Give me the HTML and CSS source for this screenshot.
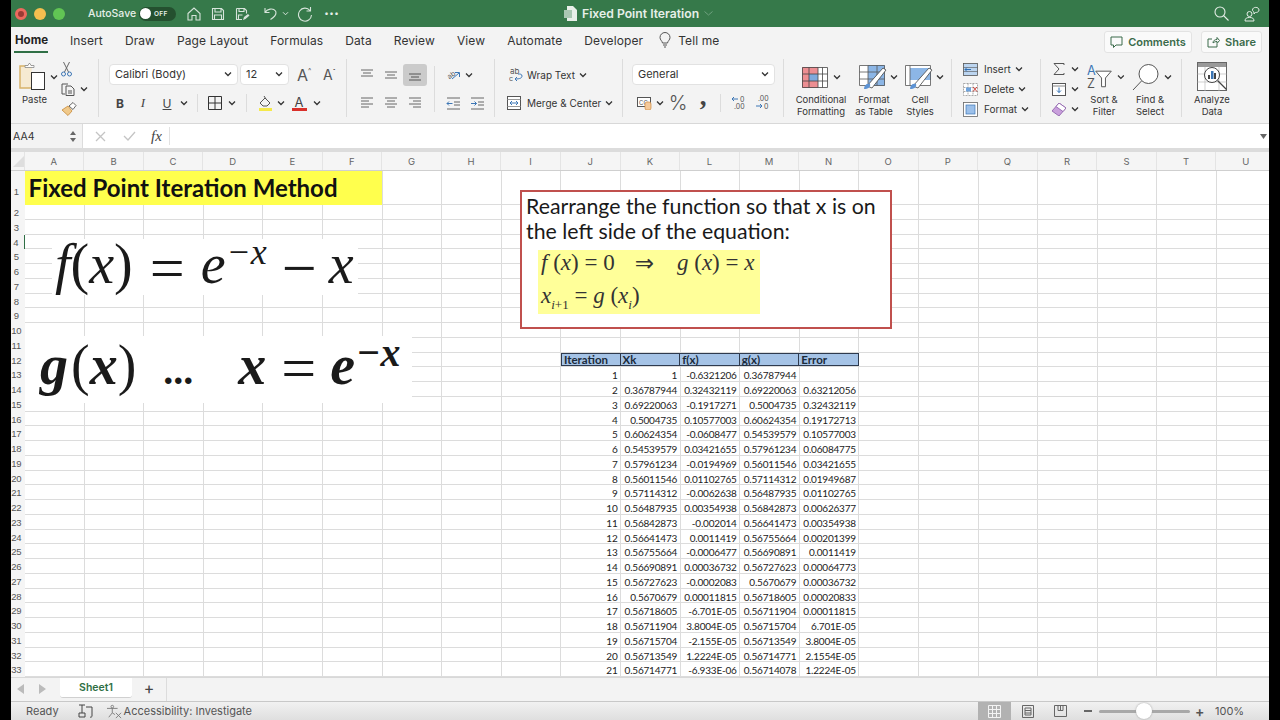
FILE: index.html
```html
<!DOCTYPE html>
<html lang="en">
<head>
    <meta charset="UTF-8">
    <title>Fixed Point Iteration</title>
    <link rel="stylesheet" href="styles.css">
</head>
<body>

<svg class="sprite" aria-hidden="true">
    <symbol id="chev" viewBox="0 0 8 6"><path d="M1 1.5l3 3 3-3" fill="none" stroke="#333" stroke-width="1.3"/></symbol>
    <symbol id="al-top" viewBox="0 0 14 14"><path d="M1 2h12M3 5h8M1 8h12" stroke="#666" fill="none"/></symbol>
    <symbol id="al-mid" viewBox="0 0 14 14"><path d="M1 4h12M3 7h8M1 10h12" stroke="#666" fill="none"/></symbol>
    <symbol id="al-bot" viewBox="0 0 14 14"><path d="M1 6h12M3 9h8M1 12h12" stroke="#555" fill="none"/></symbol>
    <symbol id="al-left" viewBox="0 0 14 14"><path d="M1 2h12M1 5h8M1 8h12M1 11h8" stroke="#666" fill="none"/></symbol>
    <symbol id="al-center" viewBox="0 0 14 14"><path d="M1 2h12M3 5h8M1 8h12M3 11h8" stroke="#666" fill="none"/></symbol>
    <symbol id="al-right" viewBox="0 0 14 14"><path d="M1 2h12M5 5h8M1 8h12M5 11h8" stroke="#666" fill="none"/></symbol>
</svg>

<div class="app">

    <!-- title bar -->
    <div class="titlebar">
        <div class="lights">
            <span class="light red"></span>
            <span class="light yellow"></span>
            <span class="light green"></span>
        </div>
        <span class="autosave">AutoSave</span>
        <span class="toggle"><i></i><b>OFF</b></span>
        <div class="quick">
            <svg width="14" height="14" viewBox="0 0 14 14"><path d="M1 6.5L7 1l6 5.5V13H9V8.5H5V13H1z" fill="none" stroke="#d6e4da" stroke-width="1.1"/></svg>
            <svg width="14" height="14" viewBox="0 0 14 14"><path d="M1.5 1.5h9l2 2v9h-11zM4 1.5V5h6V1.5M3.5 12.5V8h7v4.5" fill="none" stroke="#d6e4da" stroke-width="1.1"/></svg>
            <svg width="15" height="14" viewBox="0 0 15 14"><path d="M1.5 1.5h8l2 2v3M4 1.5v3h5v-3M1.5 1.5v11H7M3.5 12V8h4" fill="none" stroke="#d6e4da" stroke-width="1.1"/><path d="M8 13l1-3 4-3 1.5 1.5-4 3.5z" fill="#d6e4da"/></svg>
            <svg class="undo" width="15" height="15" viewBox="0 0 15 15"><path d="M2 2v4.5h4.5M2 6.5C4 3 10 1.5 12.5 5c1.5 3-1 6-5 8.5" fill="none" stroke="#d6e4da" stroke-width="1.1"/></svg>
            <svg class="undo-chev" width="7" height="5" viewBox="0 0 8 6"><path d="M1 1.5l3 3 3-3" fill="none" stroke="#d6e4da" stroke-width="1.2"/></svg>
            <svg class="redo" width="16" height="16" viewBox="0 0 16 16"><path d="M13 4.5A6.5 6.5 0 1 0 14.5 9M13.5 1v4h-4" fill="none" stroke="#d6e4da" stroke-width="1.1"/></svg>
            <span class="more">&middot;&middot;&middot;</span>
        </div>
        <div class="doctitle">
            <svg width="13" height="15" viewBox="0 0 13 15"><path d="M3 0h6l4 4v11H3z" fill="#e8efe9"/><rect x="0" y="4" width="8" height="8" fill="#a9c7b2"/></svg>
            <span>Fixed Point Iteration</span>
            <svg width="9" height="5" viewBox="0 0 9 5"><path d="M.5.5l4 3.5 4-3.5" fill="none" stroke="#6fa07f"/></svg>
        </div>
        <div class="tright">
            <svg width="15" height="15" viewBox="0 0 15 15"><circle cx="6" cy="6" r="5" fill="none" stroke="#e4ede6" stroke-width="1.1"/><path d="M9.5 9.5l5 5" stroke="#e4ede6" stroke-width="1.1"/></svg>
            <svg width="16" height="16" viewBox="0 0 16 16"><circle cx="5.5" cy="8" r="2.5" fill="none" stroke="#e4ede6"/><path d="M1 15c0-3 2-3.500 4.500-3.500S10 12 10 15zM8.500 4c0-3.500 6.500-3.500 6.500 0 0 2-2 2.500-3.500 2.500L10 8V6c-1-.5-1.500-1-1.500-2z" fill="none" stroke="#e4ede6"/></svg>
        </div>
    </div>

    <!-- ribbon tabs -->
    <div class="tabs">
        <span class="tab active">Home</span>
        <span class="tab">Insert</span>
        <span class="tab">Draw</span>
        <span class="tab">Page Layout</span>
        <span class="tab">Formulas</span>
        <span class="tab">Data</span>
        <span class="tab">Review</span>
        <span class="tab">View</span>
        <span class="tab">Automate</span>
        <span class="tab">Developer</span>
        <svg class="bulb" width="12" height="16" viewBox="0 0 12 16"><path d="M3.5 11C3 8.5 1 8 1 5.5a5 5 0 0 1 10 0C11 8 9 8.5 8.5 11zM4 13h4M5 15h2" fill="none" stroke="#555"/></svg>
        <span class="tab tell">Tell me</span>
        <div class="tabbtns">
            <span class="tabbtn comments">
                <svg width="13" height="12" viewBox="0 0 13 12"><path d="M1 1h11v8H6l-2.500 2.500V9H1z" fill="none" stroke="#3a6a4a"/></svg>
                Comments
            </span>
            <span class="tabbtn share">
                <svg width="13" height="12" viewBox="0 0 13 12"><path d="M5 3H1v8h9V8M6 7c0-2.500 2-3.500 4-3.500V1.500L12.500 4.500 10 7.500V5.500C8.500 5.500 7 6 6 7z" fill="none" stroke="#3a6a4a"/></svg>
                Share
            </span>
        </div>
    </div>

    <!-- ribbon -->
    <div class="ribbon">

        <div class="rgroup g-clip">
            <div class="big paste">
                <div class="pic">
                    <svg width="27" height="28" viewBox="0 0 27 28"><path d="M13 3H1v22h11" fill="#f6ead2" stroke="#d8b26a" stroke-width="1.5"/><path d="M6 4.500V2.500h3L10 .5h1l1 2h3v2z" fill="#fff" stroke="#888" stroke-width=".8"/><rect x="12.5" y="9.5" width="13" height="17" fill="#fff" stroke="#333"/></svg>
                    <svg class="ch" width="8" height="6"><use href="#chev"/></svg>
                </div>
                <div class="lbl">Paste</div>
            </div>
            <div class="tri">
                <div class="tri-row">
                    <svg width="11" height="15" viewBox="0 0 11 15"><path d="M2.5 0l5 10M8.5 0l-5 10" stroke="#666" fill="none"/><circle cx="2.5" cy="12" r="2" fill="none" stroke="#3c76b5"/><circle cx="8.5" cy="12" r="2" fill="none" stroke="#3c76b5"/></svg>
                </div>
                <div class="tri-row">
                    <svg width="16" height="13" viewBox="0 0 16 13"><path d="M7 1H1v10h3" fill="none" stroke="#555"/><path d="M5 3h5l3 3v6.500H5zM7 8h4M7 10h4" fill="none" stroke="#555"/></svg>
                    <svg class="ch" width="8" height="6"><use href="#chev"/></svg>
                </div>
                <div class="tri-row brush">
                    <svg width="15" height="14" viewBox="0 0 15 14"><path d="M0 8l6-4 4 5-4 4.500z" fill="#f0c98a" stroke="#c68a3a" stroke-width=".8"/><path d="M7 4l4-3.500 3 3-3 4z" fill="#fff" stroke="#444" stroke-width=".8"/></svg>
                </div>
            </div>
        </div>

        <div class="rgroup g-font">
            <div class="r1">
                <span class="select font-sel">Calibri (Body)<svg width="8" height="6"><use href="#chev"/></svg></span>
                <span class="select size-sel">12<svg width="8" height="6"><use href="#chev"/></svg></span>
                <span class="grow">A<sup>^</sup></span>
                <span class="shrink">A<sup>&#711;</sup></span>
            </div>
            <div class="r2">
                <span class="slot w22 ftxt bold">B</span>
                <span class="slot w24 ftxt ital">I</span>
                <span class="slot w24 ftxt und">U</span>
                <span class="slot w10"><svg width="8" height="6"><use href="#chev"/></svg></span>
                <span class="slot w16"><i class="vline"></i></span>
                <span class="slot w20"><svg width="14" height="14" viewBox="0 0 14 14"><path d="M.5.5h13v13H.5zM7 .5v13M.5 7h13" fill="none" stroke="#333"/></svg></span>
                <span class="slot w14"><svg width="8" height="6"><use href="#chev"/></svg></span>
                <span class="slot w14"><i class="vline"></i></span>
                <span class="slot w24">
                    <svg width="15" height="16" viewBox="0 0 15 16"><path d="M2 8l5-5 5 5-3 3H5z" fill="none" stroke="#555"/><path d="M6 1l2 3" stroke="#555"/><rect x="1" y="13" width="13" height="3" fill="#f5e94a"/></svg>
                </span>
                <span class="slot w8"><svg width="8" height="6"><use href="#chev"/></svg></span>
                <span class="slot w28 fcolor">A<i></i></span>
                <span class="slot w8"><svg width="8" height="6"><use href="#chev"/></svg></span>
            </div>
        </div>

        <div class="rgroup g-align">
            <div class="a-left">
                <div class="r1">
                    <span class="slot w24"><svg width="14" height="14"><use href="#al-top"/></svg></span>
                    <span class="slot w24"><svg width="14" height="14"><use href="#al-mid"/></svg></span>
                    <span class="slot w24 on"><svg width="14" height="14"><use href="#al-bot"/></svg></span>
                </div>
                <div class="r2">
                    <span class="slot w24"><svg width="14" height="14"><use href="#al-left"/></svg></span>
                    <span class="slot w24"><svg width="14" height="14"><use href="#al-center"/></svg></span>
                    <span class="slot w24"><svg width="14" height="14"><use href="#al-right"/></svg></span>
                </div>
            </div>
            <i class="vline tall"></i>
            <div class="a-right">
                <div class="r1">
                    <span class="slot w24"><svg width="18" height="16" viewBox="0 0 18 16"><text x="3" y="11" font-size="7" fill="#555" transform="rotate(-35 6 8)">ab</text><path d="M8 12l7-6M11 5.500h4.500V10" fill="none" stroke="#3c76b5"/></svg></span>
                    <span class="slot w8"><svg width="8" height="6"><use href="#chev"/></svg></span>
                </div>
                <div class="r2">
                    <span class="slot w24"><svg width="14" height="13" viewBox="0 0 14 13"><path d="M1 1h13M8 5h6M8 8h6M1 12h13" stroke="#666" fill="none"/><path d="M6.500 6.500H1M3 4.500l-2 2 2 2" fill="none" stroke="#3c76b5"/></svg></span>
                    <span class="slot w24"><svg width="14" height="13" viewBox="0 0 14 13"><path d="M1 1h13M8 5h6M8 8h6M1 12h13" stroke="#666" fill="none"/><path d="M1 6.500h5.500M4.500 4.500l2 2-2 2" fill="none" stroke="#3c76b5"/></svg></span>
                </div>
            </div>
        </div>

        <div class="rgroup g-wrap">
            <div class="r1 lineitem">
                <svg class="wrap-ic" width="14" height="15" viewBox="0 0 14 15"><text x="1" y="7" font-size="8" fill="#555">ab</text><text x="0" y="14" font-size="7" fill="#555">c</text><path d="M6 12c5 0 7-1 7-3s-2-2-4-2M6 12l2-2M6 12l2 2" fill="none" stroke="#3c76b5"/></svg>
                <span>Wrap Text</span>
                <svg class="after" width="8" height="6"><use href="#chev"/></svg>
            </div>
            <div class="r2 lineitem">
                <svg width="14" height="14" viewBox="0 0 14 14"><rect x=".5" y=".5" width="13" height="13" fill="#fff" stroke="#555"/><path d="M3 7h8M5 5L3 7l2 2M9 5l2 2-2 2" fill="none" stroke="#3c76b5"/><path d="M.5 3.500h13M.5 10.500h13" stroke="#999"/></svg>
                <span>Merge &amp; Center</span>
                <svg class="after" width="8" height="6"><use href="#chev"/></svg>
            </div>
        </div>

        <div class="rgroup g-num">
            <div class="r1">
                <span class="select num-sel">General<svg width="8" height="6"><use href="#chev"/></svg></span>
            </div>
            <div class="r2 num-row">
                <span class="slot w16"><svg width="15" height="13" viewBox="0 0 15 13"><rect x=".5" y=".5" width="13" height="9" fill="#fff" stroke="#555"/><text x="2" y="7.500" font-size="6" fill="#555">CC</text><rect x="8" y="5" width="6" height="8" rx="2" fill="#f4c99a" stroke="#d08a3e" stroke-width=".7"/></svg></span>
                <span class="slot w16"><svg width="8" height="6"><use href="#chev"/></svg></span>
                <span class="slot w20 pct">%</span>
                <span class="slot w20 comma">,</span>
                <span class="slot w14"><i class="vline"></i></span>
                <span class="slot w24"><svg width="18" height="16" viewBox="0 0 18 16"><path d="M8 4H2M4 2L2 4l2 2" fill="none" stroke="#3c76b5"/><text x="10" y="7" font-size="7" fill="#555">0</text><text x="4" y="14" font-size="7" fill="#555">.00</text></svg></span>
                <span class="slot w24"><svg width="18" height="16" viewBox="0 0 18 16"><text x="4" y="6" font-size="7" fill="#555">.00</text><path d="M2 11h6M6 9l2 2-2 2" fill="none" stroke="#3c76b5"/><text x="10" y="14" font-size="7" fill="#555">0</text></svg></span>
            </div>
        </div>

        <div class="rgroup g-styles">
            <div class="big cond">
                <div class="pic">
                    <svg width="26" height="21" viewBox="0 0 26 21"><rect width="26" height="21" fill="#fff"/><path d="M0 0h16v7H0zM0 14h16v7H0z" fill="#ec8e92"/><rect x="7" y="7" width="9" height="7" fill="#7fa9dc"/><rect x="0" y="7" width="7" height="7" fill="#ec8e92"/><path d="M.5.5h25v20H.5zM.5 7h25M.5 14h25M7 .5v20M16 .5v20M20.500 .5v20" fill="none" stroke="#444" stroke-width=".8"/></svg>
                    <svg class="ch" width="8" height="6"><use href="#chev"/></svg>
                </div>
                <div class="lbl">Conditional<br>Formatting</div>
            </div>
            <div class="big astable">
                <div class="pic">
                    <svg width="28" height="26" viewBox="0 0 28 26"><rect y="1" width="26" height="21" fill="#fff"/><rect x="9" y="1" width="17" height="21" fill="#8cb6e6"/><path d="M.5 1.500h25v20H.5zM.5 8h25M.5 15h25M9 1.500v20M18 1.500v20" fill="none" stroke="#555" stroke-width=".8"/><path d="M8 22L24 4l3 2-14 18z" fill="#fff" stroke="#444" stroke-width=".8"/><path d="M5 25c0-4 3-6 6-5 1 3-2 5-6 5z" fill="#5d93d4"/></svg>
                    <svg class="ch" width="8" height="6"><use href="#chev"/></svg>
                </div>
                <div class="lbl">Format<br>as Table</div>
            </div>
            <div class="big cellst">
                <div class="pic">
                    <svg width="28" height="26" viewBox="0 0 28 26"><rect y="1" width="26" height="21" fill="#fff"/><rect x="5" y="4" width="21" height="12" fill="#8cb6e6"/><path d="M.5 1.500h25v20H.5zM5 1.500v20" fill="none" stroke="#555" stroke-width=".8"/><path d="M8 22L24 4l3 2-14 18z" fill="#fff" stroke="#444" stroke-width=".8"/><path d="M5 25c0-4 3-6 6-5 1 3-2 5-6 5z" fill="#5d93d4"/></svg>
                    <svg class="ch" width="8" height="6"><use href="#chev"/></svg>
                </div>
                <div class="lbl">Cell<br>Styles</div>
            </div>
        </div>

        <div class="rgroup g-cells">
            <div class="tri-row lineitem">
                <svg width="15" height="13" viewBox="0 0 15 13"><rect x=".5" y=".5" width="14" height="12" fill="#bcd5f0" stroke="#555" stroke-width=".8"/><path d="M.5 4.500h14M.5 8.500h14" stroke="#555" stroke-width=".6"/><path d="M8 6.500H2M4 4.500l-2 2 2 2" fill="none" stroke="#2e6fb5"/></svg>
                <span>Insert</span>
                <svg class="after" width="8" height="6"><use href="#chev"/></svg>
            </div>
            <div class="tri-row lineitem">
                <svg width="15" height="13" viewBox="0 0 15 13"><path d="M.5.5h14v12H.5zM.5 4.500h14M.5 8.500h14M5 .5v12M10 .5v12" fill="#fff" stroke="#888" stroke-width=".7" stroke-dasharray="2 1"/><rect x="3" y="4.500" width="5" height="4" fill="#6fa3dc"/><path d="M10 4l4 4.500M14 4l-4 4.500" stroke="#d0413a"/></svg>
                <span>Delete</span>
                <svg class="after" width="8" height="6"><use href="#chev"/></svg>
            </div>
            <div class="tri-row lineitem">
                <svg width="15" height="15" viewBox="0 0 15 15"><rect x=".5" y=".5" width="14" height="14" fill="#fff" stroke="#666" stroke-width=".8"/><rect x="3" y="3" width="9" height="9" fill="#9cc0ea" stroke="#3c76b5" stroke-width=".7"/></svg>
                <span>Format</span>
                <svg class="after" width="8" height="6"><use href="#chev"/></svg>
            </div>
        </div>

        <div class="rgroup g-edit">
            <div class="tri">
                <div class="tri-row">
                    <svg width="14" height="12" viewBox="0 0 12 12"><path d="M11 2V.5H1L6 6l-5 5.500h10V10" fill="none" stroke="#555"/></svg>
                    <svg class="ch" width="8" height="6"><use href="#chev"/></svg>
                </div>
                <div class="tri-row">
                    <svg width="14" height="13" viewBox="0 0 14 13"><rect x=".5" y=".5" width="13" height="12" fill="#fff" stroke="#555"/><path d="M.5 3h13" stroke="#888"/><path d="M7 4.500v5M5 7.500l2 2 2-2" fill="none" stroke="#2e6fb5"/></svg>
                    <svg class="ch" width="8" height="6"><use href="#chev"/></svg>
                </div>
                <div class="tri-row">
                    <svg width="14" height="13" viewBox="0 0 14 13"><path d="M0 8l7-8 7 5-7 8z" fill="#c9a0dc" stroke="#8a5aa8" stroke-width=".8"/><path d="M7 0l7 5-3 3.500-7-5z" fill="#fff" stroke="#8a5aa8" stroke-width=".8"/></svg>
                    <svg class="ch" width="8" height="6"><use href="#chev"/></svg>
                </div>
            </div>
            <div class="big sort">
                <div class="pic">
                    <svg width="28" height="31" viewBox="0 0 28 31"><text x="1" y="13" font-size="13" fill="#3c76b5">A</text><text x="1" y="26" font-size="13" fill="#555">Z</text><path d="M10 9h16l-6 7v9h-4v-9z" fill="#fff" stroke="#555"/></svg>
                    <svg class="ch" width="8" height="6"><use href="#chev"/></svg>
                </div>
                <div class="lbl">Sort &amp;<br>Filter</div>
            </div>
            <div class="big find">
                <div class="pic">
                    <svg width="27" height="27" viewBox="0 0 27 27"><circle cx="16.5" cy="10" r="9.5" fill="#fff" stroke="#555"/><path d="M9.5 17L1 26" stroke="#555"/></svg>
                    <svg class="ch" width="8" height="6"><use href="#chev"/></svg>
                </div>
                <div class="lbl">Find &amp;<br>Select</div>
            </div>
        </div>

        <div class="rgroup g-an">
            <div class="big analyze">
                <div class="pic">
                    <svg width="31" height="30" viewBox="0 0 31 30"><rect x=".5" y=".5" width="29" height="28" fill="#fff" stroke="#666"/><rect x="1" y="1" width="28" height="4" fill="#999"/><path d="M.5 12h29M.5 20h29M8 5v24M22 5v24" stroke="#bbb" stroke-width=".7"/><circle cx="15" cy="13" r="7.5" fill="#fff" stroke="#444"/><rect x="11" y="13" width="2" height="4" fill="#444"/><rect x="14" y="9" width="2.500" height="8" fill="#3c76b5"/><rect x="17" y="11" width="2" height="6" fill="#444"/><path d="M20.500 18.500l9 9" stroke="#444" stroke-width="1.2"/></svg>
                </div>
                <div class="lbl">Analyze<br>Data</div>
            </div>
        </div>
    </div>

    <!-- formula bar -->
    <div class="fbar">
        <div class="namebox">
            <span>AA4</span>
            <svg width="8" height="13" viewBox="0 0 8 13"><path d="M4 1l3 4H1zM4 12L1 8h6z" fill="#666"/></svg>
        </div>
        <div class="fbtns">
            <svg width="11" height="11" viewBox="0 0 11 11"><path d="M1 1l9 9M10 1l-9 9" stroke="#c4c4c4" stroke-width="1.3"/></svg>
            <svg width="13" height="11" viewBox="0 0 13 11"><path d="M1 5l4 4 7-8" fill="none" stroke="#c4c4c4" stroke-width="1.3"/></svg>
            <span class="fx">fx</span>
        </div>
        <div class="finput"></div>
        <svg class="fdrop" width="7" height="5" viewBox="0 0 7 5"><path d="M0 0h7L3.500 5z" fill="#666"/></svg>
    </div>

    <!-- column headers -->
    <div class="colheads">
        <div class="corner"><i></i></div>
        <span>A</span><span>B</span><span>C</span><span>D</span><span>E</span><span>F</span><span>G</span>
        <span>H</span><span>I</span><span>J</span><span>K</span><span>L</span><span>M</span><span>N</span>
        <span>O</span><span>P</span><span>Q</span><span>R</span><span>S</span><span>T</span><span>U</span>
    </div>

    <!-- sheet -->
    <div class="sheet">
        <div class="rownums">
            <span class="first">1</span><span>2</span><span>3</span><span class="sel">4</span><span>5</span><span>6</span><span>7</span><span>8</span><span>9</span><span>10</span><span>11</span>
            <span>12</span><span>13</span><span>14</span><span>15</span><span>16</span><span>17</span><span>18</span><span>19</span><span>20</span><span>21</span><span>22</span>
            <span>23</span><span>24</span><span>25</span><span>26</span><span>27</span><span>28</span><span>29</span><span>30</span><span>31</span><span>32</span><span>33</span>
        </div>
        <div class="cells">
            <div class="row first"><div class="title">Fixed Point Iteration Method</div></div>
            <div class="row"></div><div class="row"></div><div class="row"></div><div class="row"></div><div class="row"></div>
            <div class="row"></div><div class="row"></div><div class="row"></div><div class="row"></div><div class="row"></div>
            <div class="row head"><i></i><b>Iteration</b><b>Xk</b><b>f(x)</b><b>g(x)</b><b>Error</b></div>
            <div class="row"><i></i><span>1</span><span>1</span><span>-0.6321206</span><span>0.36787944</span><span></span></div>
            <div class="row"><i></i><span>2</span><span>0.36787944</span><span>0.32432119</span><span>0.69220063</span><span>0.63212056</span></div>
            <div class="row"><i></i><span>3</span><span>0.69220063</span><span>-0.1917271</span><span>0.5004735</span><span>0.32432119</span></div>
            <div class="row"><i></i><span>4</span><span>0.5004735</span><span>0.10577003</span><span>0.60624354</span><span>0.19172713</span></div>
            <div class="row"><i></i><span>5</span><span>0.60624354</span><span>-0.0608477</span><span>0.54539579</span><span>0.10577003</span></div>
            <div class="row"><i></i><span>6</span><span>0.54539579</span><span>0.03421655</span><span>0.57961234</span><span>0.06084775</span></div>
            <div class="row"><i></i><span>7</span><span>0.57961234</span><span>-0.0194969</span><span>0.56011546</span><span>0.03421655</span></div>
            <div class="row"><i></i><span>8</span><span>0.56011546</span><span>0.01102765</span><span>0.57114312</span><span>0.01949687</span></div>
            <div class="row"><i></i><span>9</span><span>0.57114312</span><span>-0.0062638</span><span>0.56487935</span><span>0.01102765</span></div>
            <div class="row"><i></i><span>10</span><span>0.56487935</span><span>0.00354938</span><span>0.56842873</span><span>0.00626377</span></div>
            <div class="row"><i></i><span>11</span><span>0.56842873</span><span>-0.002014</span><span>0.56641473</span><span>0.00354938</span></div>
            <div class="row"><i></i><span>12</span><span>0.56641473</span><span>0.0011419</span><span>0.56755664</span><span>0.00201399</span></div>
            <div class="row"><i></i><span>13</span><span>0.56755664</span><span>-0.0006477</span><span>0.56690891</span><span>0.0011419</span></div>
            <div class="row"><i></i><span>14</span><span>0.56690891</span><span>0.00036732</span><span>0.56727623</span><span>0.00064773</span></div>
            <div class="row"><i></i><span>15</span><span>0.56727623</span><span>-0.0002083</span><span>0.5670679</span><span>0.00036732</span></div>
            <div class="row"><i></i><span>16</span><span>0.5670679</span><span>0.00011815</span><span>0.56718605</span><span>0.00020833</span></div>
            <div class="row"><i></i><span>17</span><span>0.56718605</span><span>-6.701E-05</span><span>0.56711904</span><span>0.00011815</span></div>
            <div class="row"><i></i><span>18</span><span>0.56711904</span><span>3.8004E-05</span><span>0.56715704</span><span>6.701E-05</span></div>
            <div class="row"><i></i><span>19</span><span>0.56715704</span><span>-2.155E-05</span><span>0.56713549</span><span>3.8004E-05</span></div>
            <div class="row"><i></i><span>20</span><span>0.56713549</span><span>1.2224E-05</span><span>0.56714771</span><span>2.1554E-05</span></div>
            <div class="row"><i></i><span>21</span><span>0.56714771</span><span>-6.933E-06</span><span>0.56714078</span><span>1.2224E-05</span></div>
        </div>

        <!-- pasted pictures and the text box float over the cells -->
        <div class="pic-f">
            <span>f</span><span class="par">(</span><span>x</span><span class="par">)</span>
            <span class="op">=</span><span>e</span><sup>&minus;x</sup>
            <span class="minus">&minus;</span><span>x</span>
        </div>
        <div class="pic-g">
            <span>g</span><span class="par open">(</span><span>x</span><span class="par">)</span>
            <span class="dots">...</span>
            <span>x</span><span class="op">=</span><span>e</span><sup>&minus;x</sup>
        </div>
        <div class="note">
            <p>Rearrange the function so that x is on<br>the left side of the equation:</p>
            <div class="note-eq">
                <div class="eq1"><span><em>f</em> (<em>x</em>) = 0</span><span class="arrow">&rArr;</span><span><em>g</em> (<em>x</em>) = <em>x</em></span></div>
                <div class="eq2"><em>x</em><sub><em>i</em>+1</sub> = <em>g</em> (<em>x</em><sub><em>i</em></sub>)</div>
            </div>
        </div>
    </div>

    <!-- sheet tabs -->
    <div class="sheettabs">
        <svg class="arrows" width="29" height="10" viewBox="0 0 29 10"><path d="M7 0v10L0 5zM22 0v10l7-5z" fill="#bbb"/></svg>
        <span class="sheettab">Sheet1</span>
        <span class="addsheet">+</span>
    </div>

    <!-- status bar -->
    <div class="status">
        <span class="ready">Ready</span>
        <svg class="macro" width="15" height="14" viewBox="0 0 15 14"><path d="M1 1h6M4 1v8M1 9h6v4H1zM8 3h6v9c0 1-1 1.500-2 1" fill="none" stroke="#444"/></svg>
        <svg class="a11y" width="15" height="15" viewBox="0 0 17 15"><circle cx="6" cy="2" r="1.5" fill="none" stroke="#777"/><path d="M0 4h12M6 4v5M6 9l-4 5M6 9l3 2M10 9l6 6M16 9l-6 6" fill="none" stroke="#777"/></svg>
        <span class="a11y-txt">Accessibility: Investigate</span>
        <div class="views">
            <span class="view on"><svg width="13" height="13" viewBox="0 0 13 13"><path d="M.5.5h12v12H.5zM4.500 .5v12M8.500 .5v12M.5 4.500h12M.5 8.500h12" fill="none" stroke="#f3f3f3"/></svg></span>
            <span class="view"><svg width="12" height="13" viewBox="0 0 12 13"><path d="M.5.5h11v12H.5zM3 3h6v7H3zM3 5.500h6M3 8h6" fill="none" stroke="#666"/></svg></span>
            <span class="view"><svg width="13" height="12" viewBox="0 0 13 12"><path d="M.5.5h12v11H.5zM4 .5v5h5V.5M6.500 .5v5" fill="none" stroke="#666"/></svg></span>
        </div>
        <div class="zoom">
            <i class="zminus"></i>
            <div class="slider"><i></i></div>
            <span class="zplus">+</span>
            <span class="pctz">100%</span>
        </div>
    </div>
</div>

</body>
</html>
```

FILE: styles.css
```css
*{margin:0;padding:0;box-sizing:border-box;}
body{background:#000;font-family:"Inter","Roboto",sans-serif;color:#333;overflow:hidden;}
i{font-style:normal;}
.sprite{display:none;}
.app{width:1258px;height:720px;margin-left:11px;overflow:hidden;display:flex;flex-direction:column;background:#f3f3f3;position:relative;}

/* title bar */
.titlebar{height:27px;background:#36794a;display:flex;align-items:center;color:#e6efe8;flex:none;}
.lights{display:flex;gap:7px;margin-left:4px;}
.light{width:12px;height:12px;border-radius:50%;}
.red{border:3.5px solid #ec6a5e;background:#9a3a34;}
.yellow{background:#f4bf4f;}
.green{background:#61c554;}
.autosave{margin-left:23px;font-size:10.5px;font-weight:500;width:51px;}
.toggle{width:37px;height:14px;border-radius:7px;background:#24502f;display:flex;align-items:center;}
.toggle i{width:11px;height:11px;border-radius:50%;background:#fff;margin-left:1px;}
.toggle b{font-size:6.5px;margin-left:3px;font-weight:600;letter-spacing:.3px;}
.quick{display:flex;align-items:center;margin-left:11px;gap:10px;}
.undo{margin-left:3px;}
.undo-chev{margin-left:-6px;}
.redo{margin-left:-2px;}
.more{font-size:15px;font-weight:700;margin-left:1px;}
.doctitle{display:flex;align-items:center;gap:5px;position:absolute;left:553px;top:6px;font-size:12.2px;font-weight:600;}
.tright{margin-left:auto;display:flex;gap:15px;margin-right:9px;align-items:center;}

/* ribbon tabs */
.tabs{height:28px;display:flex;align-items:center;padding:0 0 2px 4px;gap:22px;font-size:12px;letter-spacing:.1px;flex:none;position:relative;}
.tab.active{font-weight:700;font-size:11.5px;letter-spacing:0;color:#222;position:relative;}
.tab.active::after{content:"";position:absolute;left:-1px;right:0;bottom:-6px;height:2px;background:#2f6f45;}
.bulb{margin-right:-15px;margin-left:-6px;}
.tabbtns{margin-left:auto;display:flex;gap:9px;margin-right:7px;margin-top:4px;letter-spacing:0;}
.tabbtn{height:22px;background:#fafafa;border:1px solid #e3e3e3;border-radius:3px;display:flex;align-items:center;justify-content:center;gap:5px;font-size:11px;font-weight:600;color:#3a6a4a;}
.comments{width:88px;}
.share{width:61px;}

/* ribbon */
.ribbon{height:69px;padding:4px 0;display:flex;border-bottom:1px solid #d8d8d8;flex:none;}
.rgroup{height:58px;border-right:1px solid #dcdcdc;flex:none;}
.g-clip{width:88px;display:flex;padding-left:8px;}
.g-font{width:248px;padding:5px 0 0 10px;}
.g-align{width:148px;display:flex;padding:5px 0 0 8px;}
.g-wrap{width:128px;padding:5px 0 0 12px;}
.g-num{width:161px;padding:5px 0 0 9px;}
.g-styles{width:168px;display:flex;padding-left:11px;}
.g-cells{width:89px;padding-left:11px;}
.g-edit{width:141px;display:flex;padding-left:11px;}
.g-an{width:87px;border-right:0;padding-left:10px;}

.r1{height:21px;display:flex;align-items:center;}
.r2{height:20px;margin-top:8px;display:flex;align-items:center;}
.slot{display:flex;align-items:center;justify-content:center;height:20px;flex:none;}
.slot.on{background:#cbcbcb;border-radius:3px;height:22px;}
.w8{width:8px;}.w10{width:10px;}.w14{width:14px;}.w16{width:16px;}.w20{width:20px;}
.w22{width:22px;}.w24{width:24px;}.w28{width:28px;}
.vline{display:block;width:1px;height:18px;background:#dcdcdc;}
.vline.tall{height:46px;margin:2px 6px 0 7px;}

.select{height:21px;background:#fff;border:1px solid #e2e2e2;border-radius:4px;font-size:11px;line-height:17px;display:flex;align-items:center;justify-content:space-between;padding:0 5px 1px;color:#333;}
.font-sel{width:129px;}
.size-sel{width:49px;margin-left:2px;}
.num-sel{width:143px;}
.grow,.shrink{font-size:16px;color:#555;line-height:1;display:flex;}
.grow{margin-left:8px;width:26px;}
.shrink{font-size:14px;}
.grow sup,.shrink sup{font-size:7px;line-height:1;}
.ftxt{font-size:12px;color:#444;}
.bold{font-weight:700;}
.ital{font-style:italic;font-family:"Liberation Serif",serif;font-size:13px;}
.und{text-decoration:underline;}
.fcolor{flex-direction:column;font-size:13px;color:#444;line-height:12px;}
.fcolor i{display:block;width:15px;height:3px;background:#d9302a;}

.big{display:flex;flex-direction:column;align-items:center;}
.big .pic{height:35px;display:flex;align-items:center;gap:6px;width:100%;padding-top:1px;}
.big .lbl{font-size:9.5px;line-height:11.5px;text-align:center;color:#333;}
.paste{width:41px;}
.paste .lbl{align-self:flex-start;margin-left:3px;}
.paste .pic{gap:4px;}
.tri{display:flex;flex-direction:column;width:32px;}
.tri-row{height:20px;display:flex;align-items:center;gap:3px;flex:none;}
.brush{margin-left:1px;}
.g-clip .tri{padding-left:1px;}
.g-edit .tri{width:31px;}
.g-edit .tri-row{gap:5px;}

.lineitem{display:flex;align-items:center;gap:6px;font-size:10px;color:#333;}
.lineitem .after{margin-left:-2px;}
.wrap-ic{margin:0 -2px 0 2px;}
.num-row{margin-left:4px;}
.pct{font-size:20px;color:#555;font-weight:300;}
.comma{font-family:"Liberation Serif",serif;font-size:27px;font-weight:700;color:#444;margin:-14px 0 0 5px;}

.cond{width:52px;}
.cond .pic{padding-left:7px;gap:5px;}
.astable{width:46px;margin-left:4px;}
.cellst{width:46px;}
.astable .pic,.cellst .pic{gap:3px;justify-content:center;margin-left:8px;}
.sort{width:42px;}
.sort .pic{gap:4px;padding-left:3px;}
.find{width:50px;}
.find .pic{gap:5px;padding-left:7px;}
.analyze{width:40px;}
.analyze .pic{justify-content:center;padding-top:0;}
.analyze .lbl{width:44px;}

/* formula bar */
.fbar{height:28px;background:#fff;display:flex;align-items:center;flex:none;border-bottom:4px solid #dcdcdc;}
.namebox{width:72px;height:24px;background:#f3f3f3;border-right:1px solid #dcdcdc;font-size:10.5px;display:flex;align-items:center;justify-content:space-between;padding:0 5px 0 2px;}
.fbtns{display:flex;align-items:center;gap:17px;padding-left:12px;width:86px;height:24px;}
.fx{font-family:"Liberation Serif",serif;font-style:italic;font-size:15px;color:#444;margin-left:-2px;}
.finput{flex:1;height:18px;border-left:1px solid #e2e2e2;}
.fdrop{margin-right:2px;}

/* column headers */
.colheads{height:19px;display:grid;grid-template-columns:13.6px repeat(21,59.6px);background:#f5f5f5;border-bottom:1px solid #cfcfcf;flex:none;}
.colheads span{font-size:9.5px;color:#666;display:flex;align-items:center;justify-content:center;border-right:1px solid #e4e4e4;}
.corner{border-right:1px solid #e4e4e4;overflow:hidden;}
.corner i{display:block;width:0;height:0;border-left:11px solid transparent;border-bottom:11px solid #dedede;margin:4px 0 0 2px;}

/* sheet */
.sheet{height:506px;display:flex;position:relative;background:#fff;flex:none;overflow:hidden;}
.rownums{width:13.6px;flex:none;background:#f5f5f5;display:flex;flex-direction:column;}
.rownums span{height:14.75px;padding-right:3px;font-size:9.5px;letter-spacing:-.2px;font-family:"Liberation Sans",sans-serif;color:#555;line-height:15px;flex:none;white-space:nowrap;display:flex;justify-content:center;}
.rownums .first{height:34px;line-height:42px;}
.rownums .sel{border-right:1px solid #2f6f45;}
.cells{flex:1;background:repeating-linear-gradient(90deg,transparent 0,transparent 58.6px,#dcdcdc 58.6px,#dcdcdc 59.6px);}
.row{height:14.75px;border-bottom:1px solid #dcdcdc;display:grid;grid-template-columns:repeat(21,59.6px);font-family:"Lato",sans-serif;font-size:10px;color:#222;}
.row.first{height:34px;}
.row i{grid-column:span 9;}
.row span{text-align:right;padding-right:3px;line-height:17px;white-space:nowrap;letter-spacing:-.2px;}
.title{grid-column:span 6;background:#ffff4d;font-size:24px;font-weight:700;color:#111;line-height:34px;padding-left:4px;white-space:nowrap;}
.head b{background:#a5c3e6;border:1px solid #2e3a4e;border-left-width:0;font-weight:700;font-size:11.5px;line-height:11px;padding-left:2px;color:#1a2a3a;}
.head b:nth-child(2){border-left-width:1px;}

.pic-f,.pic-g{position:absolute;background:#fff;display:flex;align-items:baseline;font-family:"Liberation Serif",serif;font-style:italic;color:#1a1a1a;white-space:nowrap;font-size:56px;}
.par{font-style:normal;}
.op{font-style:normal;font-size:62px;position:relative;top:6px;}
.pic-f{left:41px;top:68px;width:306px;height:56px;line-height:46px;padding-left:3px;}
.pic-f .op{margin:0 16px 0 17px;}
.pic-f sup{font-size:36px;line-height:1;position:relative;top:-19px;margin-left:1px;}
.minus{font-style:normal;font-size:62px;margin:0 12px 0 15px;position:relative;top:6px;}
.pic-g{left:14px;top:165px;width:387px;height:67px;line-height:55px;font-weight:700;padding-left:15px;}
.pic-g sup{font-size:40px;line-height:1;position:relative;top:-18px;margin-left:1px;}
.pic-g .par{font-weight:400;}
.pic-g .open{margin-left:3px;}
.pic-g .op{font-weight:400;margin:0 14px 0 15px;top:5px;}
.dots{font-style:normal;font-size:40px;margin:0 45px 0 27px;}

.note{position:absolute;left:509px;top:19px;width:372px;height:139px;background:#fff;border:2px solid #c0504d;font-family:"Lato",sans-serif;color:#1a1a1a;padding:2px 0 0 4px;}
.note p{font-size:21.3px;line-height:25px;white-space:nowrap;}
.note-eq{width:222px;height:64px;background:#ffff99;margin:6px 0 0 12px;font-family:"Liberation Serif",serif;font-size:23px;padding-left:3px;color:#333;}
.eq1{display:flex;line-height:26px;}
.eq2{line-height:30px;margin-top:5px;}
.note-eq sub{font-size:13px;line-height:0;}
.arrow{margin:0 23px 0 20px;font-family:"DejaVu Sans",sans-serif;font-size:23px;}

/* sheet tabs */
.sheettabs{height:24px;border-top:1px solid #d8d8d8;display:flex;align-items:flex-start;flex:none;}
.arrows{margin:6px 0 0 6px;}
.sheettab{margin-left:14px;width:72px;height:20px;background:#fff;border-bottom:1px solid #d0d0d0;border-radius:0 0 3px 3px;text-align:center;font-size:10.5px;font-weight:600;color:#2f6f45;line-height:20px;}
.addsheet{width:35px;height:23px;text-align:center;font-size:16px;color:#444;line-height:20px;border-right:1px solid #dcdcdc;}

/* status bar */
.status{flex:1;border-top:1px solid #c8c8c8;background:linear-gradient(#f1f1f1,#dfdfdf);display:flex;align-items:center;font-size:11px;color:#555;}
.ready{margin-left:15px;}
.macro{margin-left:19px;}
.a11y{margin-left:14px;}
.a11y-txt{margin-left:2px;}
.views{margin-left:auto;display:flex;align-self:stretch;}
.view{width:33px;display:flex;align-items:center;justify-content:center;}
.view.on{background:#b2b2b2;}
.zoom{display:flex;align-items:center;width:192px;padding-left:7px;flex:none;}
.zminus{display:block;width:8px;height:2px;background:#666;}
.slider{width:91px;height:3px;background:#a8a8a8;margin-left:7px;position:relative;border-radius:2px;}
.slider i{position:absolute;left:37px;top:-7px;width:16px;height:16px;border-radius:50%;background:#fff;box-shadow:0 0 2px #999;}
.zplus{font-size:14px;font-weight:600;color:#555;margin-left:5px;width:10px;}
.pctz{margin-left:10px;}
```
